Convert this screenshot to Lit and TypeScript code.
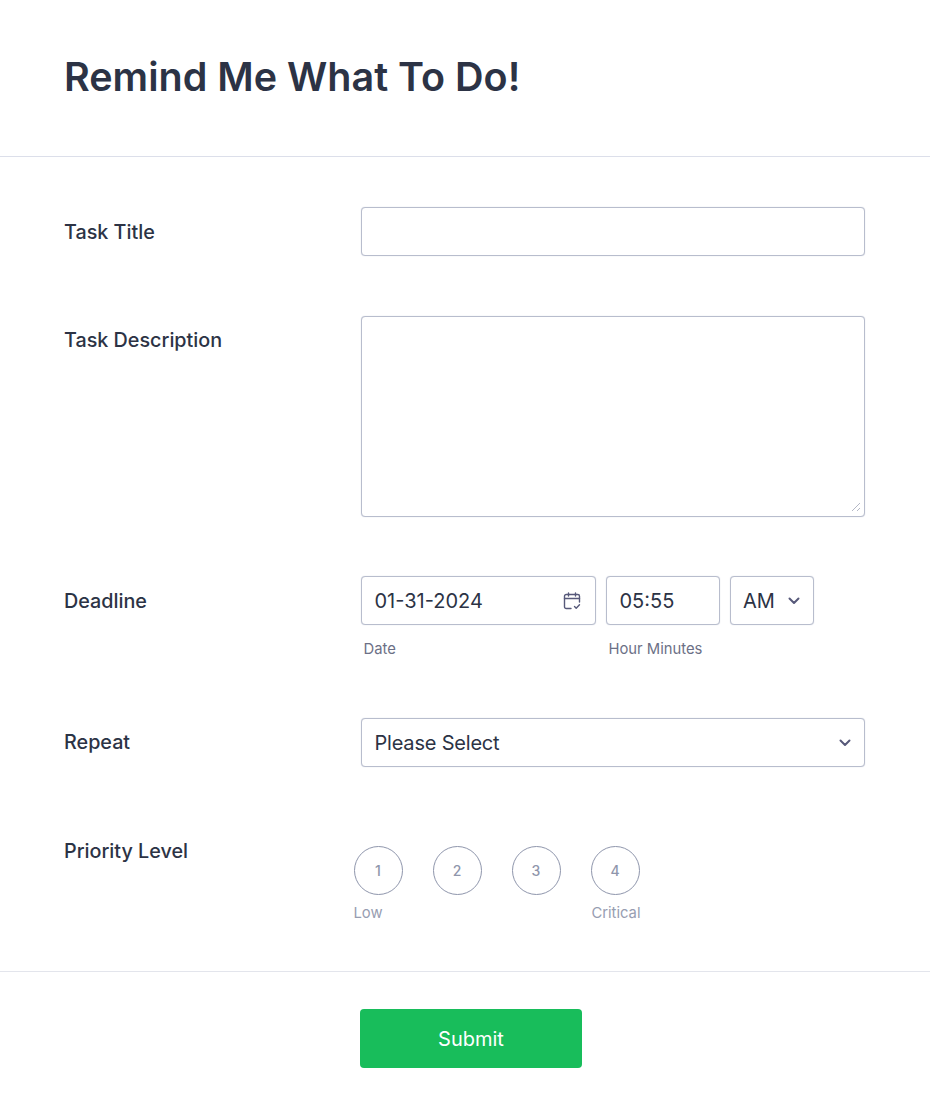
import { LitElement, html, css } from "lit";
import { customElement } from "lit/decorators.js";

const chevron = html`<svg class="chev" width="12" height="8" viewBox="0 0 12 8" fill="none"><path d="M1.5 1.5 6 6l4.5-4.5" stroke="#57597a" stroke-width="2" stroke-linecap="round" stroke-linejoin="round"/></svg>`;

@customElement("app-root")
export class AppRoot extends LitElement {
  static styles = css`
    :host { display: block; width: 930px; height: 1118px; background: #fff; color: #2c3345; font-family: Inter, "Liberation Sans", sans-serif; }
    * { box-sizing: border-box; }
    .head { height: 157px; padding: 53px 64px 0; border-bottom: 1px solid #dcdfea; }
    h1 { margin: 0; font-size: 39.5px; line-height: 48px; font-weight: 600; color: #2c3345; }
    .form { padding: 50px 65px 0 64px; height: 815px; border-bottom: 1px solid #e3e5ec; }
    .row { display: grid; grid-template-columns: 297px 504px; }
    .label { font-size: 19.75px; font-weight: 500; line-height: 24px; color: #2c3345; }
    .mid { padding-top: 13px; }
    .mid.up { padding-top: 12px; }
    .field { height: 49px; border: 1px solid #b8bdcd; border-radius: 4px; box-shadow: 0 0 1px 0 #c3c7d6; background: #fff; display: flex; align-items: center; justify-content: space-between; padding: 0 13px 0 12.5px; font-size: 20px; color: #2c3345; font-family: inherit; width: 100%; outline: none; }
    .tawrap { position: relative; height: 201px; }
    .ta { display: block; height: 201px; resize: none; padding: 13px; }
    .grip { position: absolute; right: 4px; bottom: 5px; }
    .r1 { margin-bottom: 60px; }
    .r2 { margin-bottom: 59px; }
    .r3 { margin-bottom: 60px; height: 82px; }
    .r4 { margin-bottom: 72px; }
    .dt { display: flex; }
    .w-date { width: 235px; margin-right: 10px; }
    .w-time { width: 113.5px; margin-right: 10px; }
    .w-ampm { width: 84px; }
    .cap { font-size: 14.8px; line-height: 17px; color: #6c7086; margin-top: 16px; padding-left: 2.5px; }
    .caps { display: flex; }
    .caps .c1 { width: 245px; }
    .chev { flex: none; }
    .cal { flex: none; }
    .sel { letter-spacing: -0.2px; }
    .rating { margin-left: -7.5px; padding-top: 7px; }
    .dots { display: flex; gap: 30px; }
    .dot { width: 49px; height: 49px; border-radius: 50%; border: 1px solid #8f96ac; display: flex; align-items: center; justify-content: center; font-size: 14px; color: #8f96ac; font-weight: 500; }
    .ends { display: flex; justify-content: space-between; width: 287px; margin-top: 10px; font-size: 14.8px; line-height: 17px; color: #979db1; }
    .foot { display: flex; justify-content: center; padding-top: 37px; padding-left: 12px; }
    button { width: 222px; height: 59px; border: 0; border-radius: 4px; background: #18bd5b; color: #fff; font-family: inherit; font-size: 20px; font-weight: 400; }
  `;
  render() {
    return html`
      <header class="head"><h1>Remind Me What To Do!</h1></header>
      <section class="form">
        <div class="row r1"><div class="label mid">Task Title</div><input class="field" type="text" /></div>
        <div class="row r2"><div class="label mid up">Task Description</div>
          <div class="tawrap"><textarea class="field ta"></textarea>
            <svg class="grip" width="10" height="10" viewBox="0 0 10 10" fill="none" stroke="#b4b8c6" stroke-width="1"><path d="M1 9 9 1M6 9l3-3"/></svg>
          </div>
        </div>
        <div class="row r3">
          <div class="label mid">Deadline</div>
          <div>
            <div class="dt">
              <div class="field w-date">01-31-2024
                <svg class="cal" width="20" height="20" viewBox="0 0 20 20" fill="none" stroke="#57597a" stroke-width="1.4" stroke-linecap="round" stroke-linejoin="round"><path d="M9 17.5H4.2a1.7 1.7 0 0 1-1.7-1.7V5.2a1.7 1.7 0 0 1 1.7-1.7h11.6a1.7 1.7 0 0 1 1.7 1.7V11"/><path d="M2.5 7.5h15M6.5 2v3M13.5 2v3"/><path d="m12.5 15.5 1.7 1.7 3.3-3.4"/></svg>
              </div>
              <div class="field w-time">05:55</div>
              <div class="field w-ampm">AM ${chevron}</div>
            </div>
            <div class="caps"><div class="cap c1">Date</div><div class="cap">Hour Minutes</div></div>
          </div>
        </div>
        <div class="row r4"><div class="label mid up">Repeat</div><div class="field"><span class="sel">Please Select</span> ${chevron}</div></div>
        <div class="row">
          <div class="label">Priority Level</div>
          <div class="rating">
            <div class="dots"><div class="dot">1</div><div class="dot">2</div><div class="dot">3</div><div class="dot">4</div></div>
            <div class="ends"><span>Low</span><span>Critical</span></div>
          </div>
        </div>
      </section>
      <footer class="foot"><button>Submit</button></footer>
    `;
  }
}
